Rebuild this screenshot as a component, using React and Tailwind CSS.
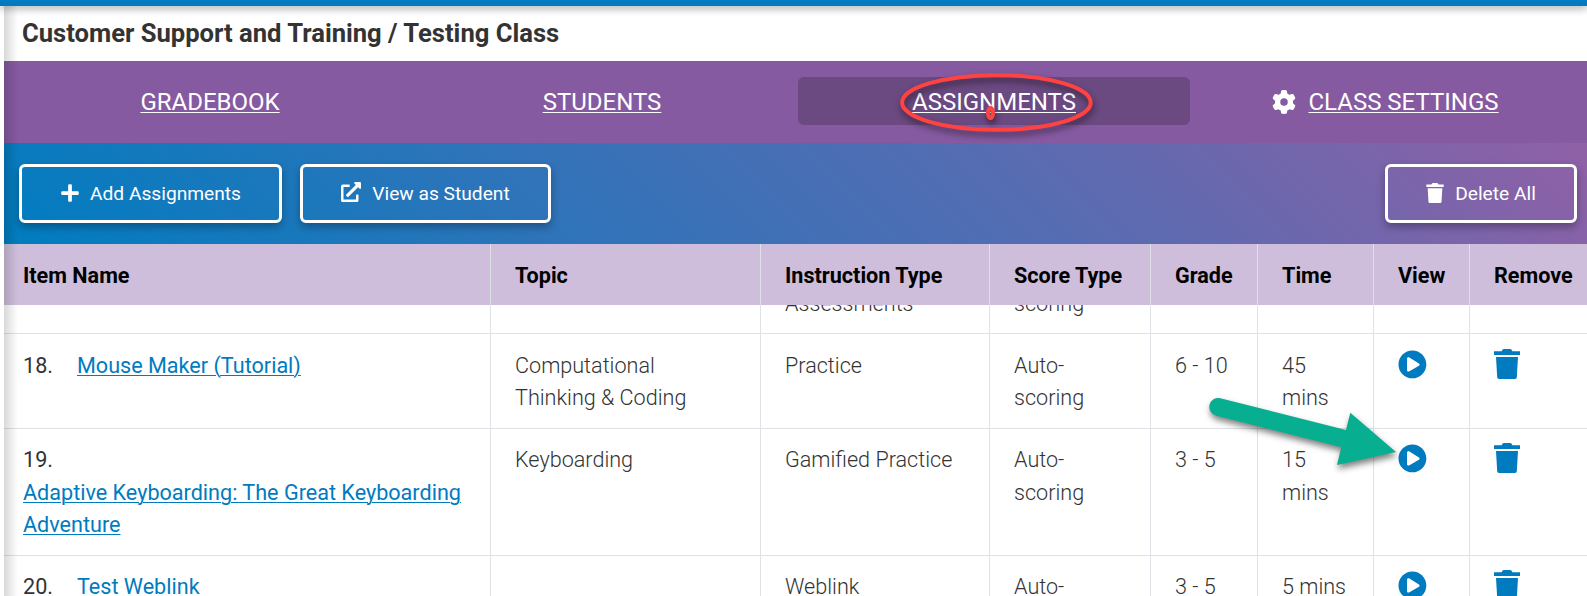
import { FaPlus, FaPlayCircle, FaExternalLinkAlt } from 'react-icons/fa';
import { FaGear } from 'react-icons/fa6';

const COLS = 'grid grid-cols-[487px_270px_229px_161px_107px_116px_96px_1fr]';
const CELLS = 'border-b border-[#dee2e6] *:border-r *:border-[#dee2e6] *:pl-6 *:last:border-r-0';

const headers = ['Item Name', 'Topic', 'Instruction Type', 'Score Type', 'Grade', 'Time', 'View', 'Remove'];

const rows = [
  { num: 18, name: 'Mouse Maker (Tutorial)', topic: 'Computational Thinking & Coding', instruction: 'Practice', grade: '6 - 10', time: '45 mins', size: 'h-[95px] *:pt-4' },
  { num: 19, name: 'Adaptive Keyboarding: The Great Keyboarding Adventure', topic: 'Keyboarding', instruction: 'Gamified Practice', grade: '3 - 5', time: '15 mins', size: 'h-[127px] *:pt-[15.3px]' },
  { num: 20, name: 'Test Weblink', topic: '', instruction: 'Weblink', grade: '3 - 5', time: '5 mins', size: 'h-[95px] *:pt-[15px]' },
];

function TrashIcon({ className }) {
  return (
    <svg viewBox="0 0 26 30" fill="currentColor" className={className}>
      <path d="M0 2.2h7.6L8.6.6Q9 0 9.8 0h6.4q.8 0 1.2.6l1 1.6H26V6H0z" />
      <path d="M2 8h22l-1.2 20.2q-.1 1.8-1.9 1.8H5.1q-1.8 0-1.9-1.8z" />
    </svg>
  );
}

function Tab({ label, active, icon }) {
  return (
    <a className={`-mt-0.5 flex h-12 items-center justify-center rounded-md pt-0.5 text-2xl text-white ${active ? 'bg-[#6b4981]' : ''}`}>
      {icon}
      <span className="underline decoration-1 underline-offset-2">{label}</span>
    </a>
  );
}

function ActionButton({ icon, label, className }) {
  return (
    <button className={`flex h-[59px] items-center justify-center gap-[11px] rounded-md border-3 border-white text-[19.2px] text-white shadow-[0_4px_9px_rgba(0,0,0,0.3)] ${className}`}>
      {icon}
      <span className="pt-px">{label}</span>
    </button>
  );
}

// Hand-drawn style markers on top of the page
function Markers() {
  return (
    <svg className="pointer-events-none absolute inset-0 z-30 drop-shadow-[1px_4px_3px_rgba(0,0,0,0.5)]" width="1587" height="596">
      <g fill="none" stroke="#ff4242" strokeWidth="4">
        <ellipse cx="996.4" cy="102.5" rx="94.3" ry="27.3" />
        <ellipse cx="990.5" cy="113" rx="2.5" ry="5.2" />
      </g>
      <path fill="#08ae90" d="M1220.3 398.2 1346 430 1350.3 412.7 1396 452 1337 465 1341.3 447.3 1216.3 415.8A9 9 0 0 1 1220.3 398.2z" />
    </svg>
  );
}

export default function App() {
  return (
    <div className="relative h-[596px] w-[1587px] overflow-hidden bg-white font-['Roboto',sans-serif] text-[#333]">
      <div className="relative z-10 h-1.5 bg-[#007bc0] shadow-[0_2px_9px_rgba(0,0,0,0.4)]" />
      <div className="relative ml-1 h-[590px]">
        <h1 className="flex h-[55px] items-center pl-[18px] text-[25.6px] font-bold">Customer Support and Training / Testing Class</h1>

        <nav className="grid h-[82px] grid-cols-4 items-center bg-[#855aa0] pr-[5px] pl-2.5">
          <Tab label="GRADEBOOK" />
          <Tab label="STUDENTS" />
          <Tab label="ASSIGNMENTS" active />
          <Tab label="CLASS SETTINGS" icon={<FaGear className="mr-3 -ml-px" />} />
        </nav>

        <div className="flex h-[101px] items-center bg-linear-[45deg,#007dc0,#4170b6_47%,#566cb2_64%,#9060a6] pr-2.5 pl-[15px]">
          <ActionButton className="w-[263px]" icon={<FaPlus className="-mr-px -mt-px text-xl" />} label="Add Assignments" />
          <ActionButton className="ml-[18px] w-[251px]" icon={<FaExternalLinkAlt className="-mt-1 text-xl" />} label="View as Student" />
          <ActionButton className="ml-auto w-[192px]" icon={<TrashIcon className="-mt-0.5 h-5 w-[18px]" />} label="Delete All" />
        </div>

        <div className={`${COLS} h-[61px] bg-[#cebedb] text-[21.6px] font-bold text-black`}>
          {headers.map((h, i) => (
            <div key={h} className={`flex items-center pt-[3px] whitespace-nowrap ${i ? 'pl-6' : 'pl-[19px]'} ${i < 7 ? 'border-r border-[#dee2e6]' : ''}`}>{h}</div>
          ))}
        </div>

        <div className="text-[21.6px] leading-[32.4px] font-light">
          {/* last line of the row that is scrolled under the header */}
          <div className={`${COLS} ${CELLS} h-[29px] overflow-hidden`}>
            <div />
            <div />
            <div><p className="-mt-[17px]">Assessments</p></div>
            <div><p className="-mt-[17px]">scoring</p></div>
            <div />
            <div />
            <div />
            <div />
          </div>
          {rows.map((r) => (
            <div key={r.num} className={`${COLS} ${CELLS} ${r.size}`}>
              <div className="pl-[19px]! font-normal">
                <span className="mr-6">{r.num}.</span>
                <a className={`inline-block text-[#007bc0] decoration-1 underline-offset-2 ${r.num === 20 ? '' : 'underline'}`}>{r.name}</a>
              </div>
              <div className="pr-12">{r.topic}</div>
              <div>{r.instruction}</div>
              <div className="pr-10">Auto-<br />scoring</div>
              <div>{r.grade}</div>
              <div className="pr-5">{r.time}</div>
              <div><FaPlayCircle className="text-[28.8px] text-[#007bc0]" /></div>
              <div><TrashIcon className="-mt-px h-[30px] w-[26px] text-[#007bc0]" /></div>
            </div>
          ))}
        </div>

        <div className="pointer-events-none absolute inset-y-0 left-0 z-20 w-3.5 bg-linear-to-r from-black/15 to-transparent" />
      </div>
      <Markers />
    </div>
  );
}
